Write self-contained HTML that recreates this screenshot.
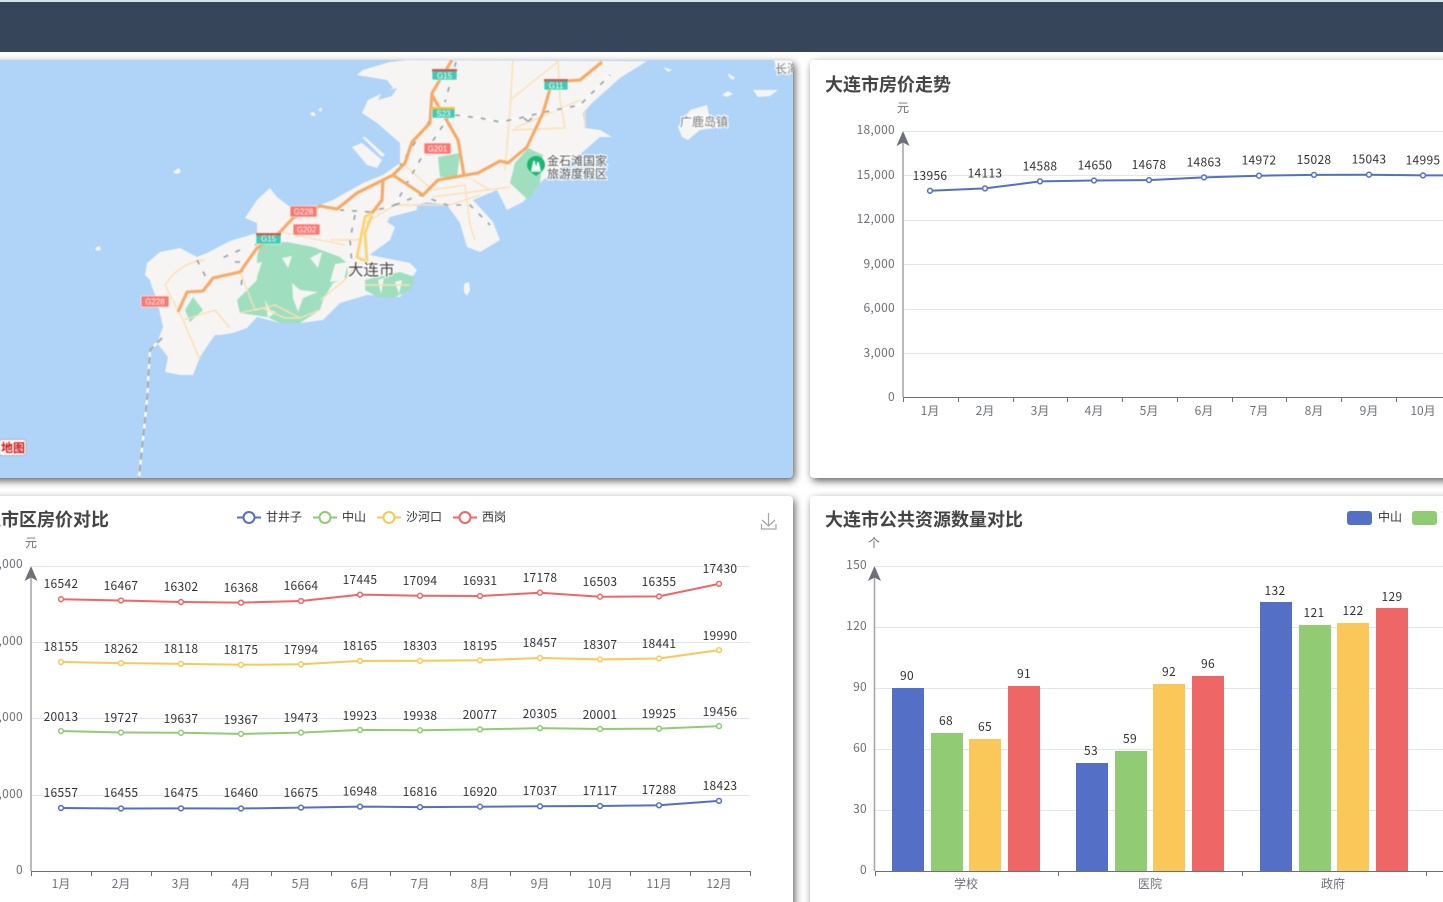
<!DOCTYPE html>
<html lang="zh">
<head>
<meta charset="utf-8">
<title>大连市房价</title>
<style>
html,body{margin:0;padding:0;width:1443px;height:902px;overflow:hidden;background:#fff}
body{position:relative;font-family:"Liberation Sans","Noto Sans CJK SC",sans-serif}
#top{position:absolute;left:0;top:0;width:1443px;height:52px;background:#364559;border-top:2px solid #cfe6e4;box-sizing:border-box}
.panel{position:absolute;background:#fff;border-radius:4px;box-shadow:2px 3px 8px rgba(0,0,0,.62)}
#map{left:-12px;top:60px;width:805px;height:418px;background:#b0d3f8;overflow:hidden}
#map svg{position:absolute;left:12px;top:-60px;filter:blur(.6px)}
#charts{position:absolute;left:0;top:0;filter:blur(.28px)}
text{font-family:"Noto Sans CJK SC","Liberation Sans",sans-serif;font-size:12px}
.t{font-size:18px;font-weight:bold;fill:#444}
.l{fill:#333;text-anchor:middle;letter-spacing:.3px}
.a{fill:#6e7079;text-anchor:end;letter-spacing:.3px}
.x{fill:#6e7079;text-anchor:middle}
.lg{fill:#333}
.g{stroke:#e0e6f1;stroke-width:1;fill:none}
.ya{stroke:#a8a8ac;stroke-width:1.6;fill:none}
.xa{stroke:#6e7079;stroke-width:1;fill:none}
.ln{fill:none;stroke-width:2;stroke-linejoin:round}
.d circle{fill:#fff;stroke-width:1.5;r:2.4px}
.m1{stroke:#f7a965;stroke-width:3.1;fill:none;stroke-linejoin:round}
.m2{stroke:#fdd36d;stroke-width:2.8;fill:none;stroke-linejoin:round}
.m3{stroke:#fcdfb2;stroke-width:1.4;fill:none}
.m4{stroke:#959ea8;stroke-width:1.6;fill:none;stroke-dasharray:5 8}
.m5{stroke:#fff;stroke-width:2.2;fill:none}
.sl{font-size:8px;fill:#fff;text-anchor:middle;font-family:"Liberation Sans",sans-serif}
.mt{fill:#555;stroke:#fff;stroke-width:2.4px;paint-order:stroke;stroke-opacity:.85}
</style>
</head>
<body>
<div id="top"></div>
<div class="panel" id="map">
<svg width="793" height="478" viewBox="0 0 793 478" xmlns="http://www.w3.org/2000/svg">
<g fill="#f6f5f3">
<polygon points="165,372 180,375 193,375 200,357 208,345 215,335 220,335 233,333 247,328 257,317 280,323 300,323 323,320 340,303 367,295 400,297 417,270 410,263 380,257 370,255 372,253 390,240 395,227 387,222 390,217 417,210 417,205 427,202 447,205 460,223 467,247 480,252 500,240 493,222 473,200 497,190 507,210 523,202 543,180 577,157 600,137 612,137 600,130 585,128 583,113 592,103 620,78 647,61 407,60 390,62 363,70 357,75 375,78 387,80 393,88 368,100 362,113 377,123 400,143 400,163 383,175 363,183 333,200 320,205 290,207 277,197 270,188 257,200 245,218 257,223 257,233 230,241 207,253 197,257 180,248 160,252 147,263 145,275 150,280 152,287 157,300 163,327 157,343 168,357"/>
<polygon points="352,147 362,143 382,160 377,168 367,165"/>
<polygon points="362,137 365,137 385,155 382,157"/>
<polygon points="678,127 690,110 707,105 710,120 727,122 720,127 700,130 688,140 682,137"/>
<polygon points="753,90 778,90 770,96 758,97"/>
<polygon points="722,95 728,91 733,94 727,97"/>
<polygon points="728,73 735,78 733,80 729,77"/>
<polygon points="663,67 672,70 668,72"/>
<polygon points="464,284 469,282 470,290 467,296 464,292"/>
<polygon points="173,172 179,168 181,172 177,174"/>
<polygon points="310,113 314,112 316,116 312,116"/>
<polygon points="318,110 322,107 321,112"/>
<polygon points="95,248 100,246 101,250 97,251"/>
<polygon points="774,60 793,60 793,72 778,74"/>
</g>
<path fill="#b0d3f8" d="M382,92 L397,88 L392,96 L378,100Z"/>
<g fill="#9fdfbf">
<polygon points="257,257 260,243 287,242 313,247 340,257 347,263 348,277 333,283 323,300 320,310 300,323 280,323 267,317 240,313 237,300 257,280"/>
<polygon points="365,280 377,277 400,272 415,277 410,290 393,298 377,297 365,290"/>
<polygon points="185,310 193,297 203,310 190,322"/>
<polygon points="515,163 528,148 543,155 540,183 528,200 510,183"/>
<polygon points="438,157 460,153 457,177 440,177"/>
</g>
<g fill="#f6f5f3">
<polygon points="292,283 300,290 318,292 303,298 298,312 293,298"/>
<polygon points="282,258 292,256 288,268"/>
<polygon points="265,300 270,310 276,312 268,318"/>
<polygon points="310,258 322,252 318,268"/>
<polygon points="250,265 262,262 256,280"/>
<polygon points="335,264 348,262 344,280 330,282"/>
<polygon points="378,280 384,278 381,294"/>
<polygon points="395,282 402,280 399,294"/>
</g>
<g class="m3">
<path d="M165,285 Q180,262 205,260 M165,285 L183,320 L200,360 M183,320 L215,310 L230,328 M240,272 L255,310 L275,305 L300,318 M240,313 L262,308 L285,318 L300,318 L320,310 M320,300 L345,280 L358,262 M280,232 L345,245 M330,240 L360,240"/>
<path d="M405,165 L432,190 L465,185 L470,225 L475,240 M433,197 L510,187 M513,60 L510,110 L505,170 M510,100 L560,60 M512,130 L565,128 L560,100 L558,62 M515,128 L580,100 M362,225 L395,205 L450,205 M450,205 L480,195 M365,285 L410,285"/>
<path d="M585,110 L585,128 M473,180 L490,190"/>
</g>
<path class="m5" d="M162,338 L150,350 L147,400 L139,478"/>
<path stroke="#a0a8b0" stroke-width="2" stroke-dasharray="7 5" fill="none" d="M162,338 L150,350 L147,400 L139,478"/>
<g class="m5" opacity=".55">
<path d="M450,115 L420,160 L395,205 L370,212"/>
<path d="M455,115 L480,118 L500,122 L520,118 L545,112 L580,105 L610,75"/>
</g>
<g class="m4">
<path d="M456,62 L445,102 M450,115 L420,160 L395,205 L370,212 M370,212 L340,210"/>
<path d="M455,115 L480,118 L500,122 L520,118 L545,112 L580,105 L610,75"/>
<path d="M430,120 L400,165 M355,215 L350,240 L352,265 M197,260 L210,285 M235,262 L243,262 L241,290 M240,250 L222,258 M270,235 L255,245"/>
<path d="M395,205 L420,195 L447,205 L470,205 L490,225"/>
<path d="M524,118 L532,125 M532,118 L524,125"/>
</g>
<g class="m2">
<path d="M378,208 L365,217 L357,257 L367,262 L365,233 L372,215"/>
</g>
<g class="m1">
<path d="M452,60 L432,93 L430,123 L412,142 L405,163 L393,175 L357,193 L337,209 L320,206 L293,218 L280,232 L257,248 L240,272 L213,278 L203,291 L187,292 L178,312"/>
<path d="M432,95 L458,140 L464,175"/>
<path d="M393,175 L423,195 L438,180 L478,173 L500,161 L508,163 L527,147 L543,113 L552,82 L580,80 L602,62"/>
<path d="M383,180 L382,200 L372,213"/>
</g>
<g>
<rect x="432" y="69" width="25" height="11" rx="1" fill="#42c9b3" stroke="#fff" stroke-width=".6"/><rect x="432" y="69" width="25" height="2.500" fill="#c0605a"/><text x="444.500" y="78.500" class="sl">G15</text>
<rect x="432" y="107" width="23" height="11" rx="1" fill="#42c9b3" stroke="#fff" stroke-width=".6"/><rect x="432" y="107" width="23" height="2.500" fill="#e8c24a"/><text x="443.500" y="116.500" class="sl">S23</text>
<rect x="424" y="143" width="27" height="11" rx="1" fill="#fd7771" stroke="#fff" stroke-width=".6"/><text x="437.500" y="151.500" class="sl">G201</text>
<rect x="544" y="79" width="24" height="11" rx="1" fill="#42c9b3" stroke="#fff" stroke-width=".6"/><rect x="544" y="79" width="24" height="2.500" fill="#c0605a"/><text x="556" y="88.500" class="sl">G11</text>
<rect x="290" y="206" width="27" height="11" rx="1" fill="#fd7771" stroke="#fff" stroke-width=".6"/><text x="303.500" y="214.500" class="sl">G228</text>
<rect x="293" y="224" width="27" height="11" rx="1" fill="#fd7771" stroke="#fff" stroke-width=".6"/><text x="306.500" y="232.500" class="sl">G202</text>
<rect x="256" y="233" width="25" height="11" rx="1" fill="#42c9b3" stroke="#fff" stroke-width=".6"/><rect x="256" y="233" width="25" height="2.500" fill="#c0605a"/><text x="268.500" y="241.500" class="sl">G15</text>
<rect x="141" y="296" width="28" height="11" rx="1" fill="#fd7771" stroke="#fff" stroke-width=".6"/><text x="155" y="304.500" class="sl">G228</text>
</g>
<path d="M527,165 a9,9 0 1 1 18,0 c0,5 -5,8 -9,11 c-4,-3 -9,-6 -9,-11z" fill="#16b96f"/>
<path d="M532,170 L534,161 L536,170 M536,170 L538,162 L540,170 M531,171 L541,171" stroke="#fff" stroke-width="1.500" fill="#fff"/>
<text x="547" y="165" class="mt">金石滩国家</text>
<text x="547" y="178" class="mt">旅游度假区</text>
<text x="348" y="275" class="mt" style="font-size:15.500px;fill:#444">大连市</text>
<text x="680" y="126" class="mt" style="fill:#777">广鹿岛镇</text>
<text x="775" y="73" class="mt" style="fill:#777">长海</text>
<path d="M-2,437 L4,443 L4,455 L-2,455Z" fill="#fff"/>
<rect x="-1" y="439.500" width="27" height="16" rx="3" fill="#fff" stroke="#b5b5b5" stroke-width="1"/>
<text x="1" y="452" style="font-size:12px;font-weight:bold;fill:#d40f0f">地图</text>
</svg>
</div>
<div class="panel" style="left:810px;top:60px;width:660px;height:418px"></div>
<div class="panel" style="left:-12px;top:496px;width:805px;height:440px"></div>
<div class="panel" style="left:810px;top:496px;width:660px;height:440px"></div>

<svg id="charts" width="1443" height="902" viewBox="0 0 1443 902" xmlns="http://www.w3.org/2000/svg">
<!-- price trend -->
<text x="825" y="91" class="t">大连市房价走势</text>
<text x="903" y="112" class="x">元</text>
<path class="g" d="M903,131.500H1443M903,175.500H1443M903,220.500H1443M903,264.500H1443M903,309.500H1443M903,353.500H1443"/>
<text x="895" y="134" class="a">18,000</text>
<text x="895" y="179" class="a">15,000</text>
<text x="895" y="223" class="a">12,000</text>
<text x="895" y="268" class="a">9,000</text>
<text x="895" y="312" class="a">6,000</text>
<text x="895" y="357" class="a">3,000</text>
<text x="895" y="401" class="a">0</text>
<path class="ya" d="M903,140V397"/>
<path d="M903,131L909.500,146L903,142.500L896.500,146Z" fill="#6e7079"/>
<path class="xa" d="M903,397.500H1443M903.500,397V402M958.500,397V402M1013.500,397V402M1067.500,397V402M1122.500,397V402M1177.500,397V402M1232.500,397V402M1286.500,397V402M1341.500,397V402M1396.500,397V402"/>
<text x="930" y="415" class="x">1月</text><text x="985" y="415" class="x">2月</text><text x="1040" y="415" class="x">3月</text><text x="1094" y="415" class="x">4月</text><text x="1149" y="415" class="x">5月</text><text x="1204" y="415" class="x">6月</text><text x="1259" y="415" class="x">7月</text><text x="1314" y="415" class="x">8月</text><text x="1369" y="415" class="x">9月</text><text x="1423" y="415" class="x">10月</text>
<polyline class="ln" stroke="#5470c6" points="930,190.800 985,188.400 1040,181.400 1094,180.500 1149,180.100 1204,177.400 1259,175.700 1314,174.900 1369,174.700 1423,175.400 1478,175.500"/>
<g class="d" stroke="#5470c6"><circle cx="930" cy="190.800"/><circle cx="985" cy="188.400"/><circle cx="1040" cy="181.400"/><circle cx="1094" cy="180.500"/><circle cx="1149" cy="180.100"/><circle cx="1204" cy="177.400"/><circle cx="1259" cy="175.700"/><circle cx="1314" cy="174.900"/><circle cx="1369" cy="174.700"/><circle cx="1423" cy="175.400"/></g>
<text x="930" y="180" class="l">13956</text><text x="985" y="177.500" class="l">14113</text><text x="1040" y="170.500" class="l">14588</text><text x="1095" y="169.500" class="l">14650</text><text x="1149" y="169" class="l">14678</text><text x="1204" y="166.500" class="l">14863</text><text x="1259" y="164.500" class="l">14972</text><text x="1314" y="164" class="l">15028</text><text x="1369" y="163.500" class="l">15043</text><text x="1423" y="164.500" class="l">14995</text>

<!-- district stack -->
<text x="-35" y="526" class="t">大连市区房价对比</text>
<g stroke-width="2" fill="#fff">
<path d="M237,517.500H261" stroke="#5470c6"/><circle cx="249" cy="517.500" r="5.500" stroke="#5470c6"/>
<path d="M313,517.500H337" stroke="#91cc75"/><circle cx="325" cy="517.500" r="5.500" stroke="#91cc75"/>
<path d="M377,517.500H401" stroke="#fac858"/><circle cx="389" cy="517.500" r="5.500" stroke="#fac858"/>
<path d="M453,517.500H477" stroke="#ee6666"/><circle cx="465" cy="517.500" r="5.500" stroke="#ee6666"/>
</g>
<text x="266" y="521" class="lg">甘井子</text><text x="342" y="521" class="lg">中山</text><text x="406" y="521" class="lg">沙河口</text><text x="482" y="521" class="lg">西岗</text>
<path d="M768.500,513V526M762,520L768.500,526L775,520M761.500,524V529H776V524" fill="none" stroke="#a6a6a6" stroke-width="1.200"/>
<text x="31" y="547" class="x">元</text>
<path class="g" d="M31,566.500H750M31,642.500H750M31,718.500H750M31,795.500H750"/>
<text x="23" y="568" class="a">80,000</text><text x="23" y="645" class="a">60,000</text><text x="23" y="721" class="a">40,000</text><text x="23" y="798" class="a">20,000</text><text x="23" y="874" class="a">0</text>
<path class="ya" d="M31,575V871"/>
<path d="M31,566L37.500,581L31,577.500L24.500,581Z" fill="#6e7079"/>
<path class="xa" d="M31,871.500H750M31.500,871V876M91.500,871V876M151.500,871V876M211.500,871V876M271.500,871V876M331.500,871V876M390.500,871V876M450.500,871V876M510.500,871V876M570.500,871V876M630.500,871V876M690.500,871V876M750.500,871V876"/>
<text x="61" y="888" class="x">1月</text><text x="121" y="888" class="x">2月</text><text x="181" y="888" class="x">3月</text><text x="241" y="888" class="x">4月</text><text x="301" y="888" class="x">5月</text><text x="360" y="888" class="x">6月</text><text x="420" y="888" class="x">7月</text><text x="480" y="888" class="x">8月</text><text x="540" y="888" class="x">9月</text><text x="600" y="888" class="x">10月</text><text x="659" y="888" class="x">11月</text><text x="719" y="888" class="x">12月</text>

<polyline class="ln" stroke="#5470c6" points="61,808 121,808.500 181,808.400 241,808.500 301,807.600 360,806.600 420,807.100 480,806.700 540,806.300 600,806 659,805.300 719,800.900"/>
<g class="d" stroke="#5470c6"><circle cx="61" cy="808"/><circle cx="121" cy="808.500"/><circle cx="181" cy="808.400"/><circle cx="241" cy="808.500"/><circle cx="301" cy="807.600"/><circle cx="360" cy="806.600"/><circle cx="420" cy="807.100"/><circle cx="480" cy="806.700"/><circle cx="540" cy="806.300"/><circle cx="600" cy="806"/><circle cx="659" cy="805.300"/><circle cx="719" cy="800.900"/></g>
<polyline class="ln" stroke="#91cc75" points="61,731 121,732.500 181,732.800 241,733.900 301,732.600 360,729.900 420,730.300 480,729.400 540,728.100 600,729 659,728.600 719,726.100"/>
<g class="d" stroke="#91cc75"><circle cx="61" cy="731"/><circle cx="121" cy="732.500"/><circle cx="181" cy="732.800"/><circle cx="241" cy="733.900"/><circle cx="301" cy="732.600"/><circle cx="360" cy="729.900"/><circle cx="420" cy="730.300"/><circle cx="480" cy="729.400"/><circle cx="540" cy="728.100"/><circle cx="600" cy="729"/><circle cx="659" cy="728.600"/><circle cx="719" cy="726.100"/></g>
<polyline class="ln" stroke="#fac858" points="61,662 121,663.100 181,663.900 241,664.800 301,664.300 360,660.900 420,660.800 480,660.300 540,658 600,659.400 659,658.500 719,650.100"/>
<g class="d" stroke="#fac858"><circle cx="61" cy="662"/><circle cx="121" cy="663.100"/><circle cx="181" cy="663.900"/><circle cx="241" cy="664.800"/><circle cx="301" cy="664.300"/><circle cx="360" cy="660.900"/><circle cx="420" cy="660.800"/><circle cx="480" cy="660.300"/><circle cx="540" cy="658"/><circle cx="600" cy="659.400"/><circle cx="659" cy="658.500"/><circle cx="719" cy="650.100"/></g>
<polyline class="ln" stroke="#ee6666" points="61,599.200 121,600.500 181,602 241,602.600 301,601 360,594.600 420,595.800 480,596 540,592.700 600,596.700 659,596.400 719,583.900"/>
<g class="d" stroke="#ee6666"><circle cx="61" cy="599.200"/><circle cx="121" cy="600.500"/><circle cx="181" cy="602"/><circle cx="241" cy="602.600"/><circle cx="301" cy="601"/><circle cx="360" cy="594.600"/><circle cx="420" cy="595.800"/><circle cx="480" cy="596"/><circle cx="540" cy="592.700"/><circle cx="600" cy="596.700"/><circle cx="659" cy="596.400"/><circle cx="719" cy="583.900"/></g>

<text x="61" y="797" class="l">16557</text><text x="121" y="797" class="l">16455</text><text x="181" y="797" class="l">16475</text><text x="241" y="797" class="l">16460</text><text x="301" y="797" class="l">16675</text><text x="360" y="795.500" class="l">16948</text><text x="420" y="796" class="l">16816</text><text x="480" y="796" class="l">16920</text><text x="540" y="795" class="l">17037</text><text x="600" y="795" class="l">17117</text><text x="659" y="794" class="l">17288</text><text x="720" y="790" class="l">18423</text>
<text x="61" y="721" class="l">20013</text><text x="121" y="722" class="l">19727</text><text x="181" y="723" class="l">19637</text><text x="241" y="724" class="l">19367</text><text x="301" y="722" class="l">19473</text><text x="360" y="720" class="l">19923</text><text x="420" y="720" class="l">19938</text><text x="480" y="719" class="l">20077</text><text x="540" y="718" class="l">20305</text><text x="600" y="719" class="l">20001</text><text x="659" y="718" class="l">19925</text><text x="720" y="716" class="l">19456</text>
<text x="61" y="651" class="l">18155</text><text x="121" y="653" class="l">18262</text><text x="181" y="653" class="l">18118</text><text x="241" y="654" class="l">18175</text><text x="301" y="654" class="l">17994</text><text x="360" y="650" class="l">18165</text><text x="420" y="650" class="l">18303</text><text x="480" y="650" class="l">18195</text><text x="540" y="647" class="l">18457</text><text x="600" y="649" class="l">18307</text><text x="659" y="648" class="l">18441</text><text x="720" y="640" class="l">19990</text>
<text x="61" y="588" class="l">16542</text><text x="121" y="590" class="l">16467</text><text x="181" y="591" class="l">16302</text><text x="241" y="592" class="l">16368</text><text x="301" y="590" class="l">16664</text><text x="360" y="584" class="l">17445</text><text x="420" y="585" class="l">17094</text><text x="480" y="585" class="l">16931</text><text x="540" y="582" class="l">17178</text><text x="600" y="586" class="l">16503</text><text x="659" y="586" class="l">16355</text><text x="720" y="573" class="l">17430</text>

<!-- resources bars -->
<text x="825" y="526" class="t">大连市公共资源数量对比</text>
<rect x="1347" y="511" width="25" height="14" rx="3" fill="#5470c6"/><text x="1378" y="521" class="lg">中山</text>
<rect x="1412" y="511" width="25" height="14" rx="3" fill="#91cc75"/><text x="1442" y="521" class="lg">西岗</text>
<text x="874" y="547" class="x">个</text>
<path class="g" d="M875,566.500H1443M875,627.500H1443M875,688.500H1443M875,749.500H1443M875,810.500H1443"/>
<text x="867" y="569" class="a">150</text><text x="867" y="630" class="a">120</text><text x="867" y="691" class="a">90</text><text x="867" y="752" class="a">60</text><text x="867" y="813" class="a">30</text><text x="867" y="874" class="a">0</text>
<path class="ya" d="M874.500,575V871"/>
<path d="M874.500,566L881,581L874.500,577.500L868,581Z" fill="#6e7079"/>
<g fill="#5470c6"><rect x="892" y="688" width="32" height="183"/><rect x="1076" y="763" width="32" height="108"/><rect x="1260" y="602" width="32" height="269"/></g>
<g fill="#91cc75"><rect x="931" y="733" width="32" height="138"/><rect x="1115" y="751" width="32" height="120"/><rect x="1299" y="625" width="32" height="246"/></g>
<g fill="#fac858"><rect x="969" y="739" width="32" height="132"/><rect x="1153" y="684" width="32" height="187"/><rect x="1337" y="623" width="32" height="248"/></g>
<g fill="#ee6666"><rect x="1008" y="686" width="32" height="185"/><rect x="1192" y="676" width="32" height="195"/><rect x="1376" y="608" width="32" height="263"/></g>
<path class="xa" d="M875,871.500H1443M875.500,871V876M1058.500,871V876M1242.500,871V876M1426.500,871V876"/>
<text x="966" y="888" class="x">学校</text><text x="1150" y="888" class="x">医院</text><text x="1333" y="888" class="x">政府</text>
<text x="907" y="680" class="l">90</text><text x="946" y="725" class="l">68</text><text x="985" y="731" class="l">65</text><text x="1024" y="678" class="l">91</text>
<text x="1091" y="755" class="l">53</text><text x="1130" y="743" class="l">59</text><text x="1169" y="676" class="l">92</text><text x="1208" y="668" class="l">96</text>
<text x="1275" y="595" class="l">132</text><text x="1314" y="617" class="l">121</text><text x="1353" y="615" class="l">122</text><text x="1392" y="601" class="l">129</text>
</svg>
</body>
</html>
